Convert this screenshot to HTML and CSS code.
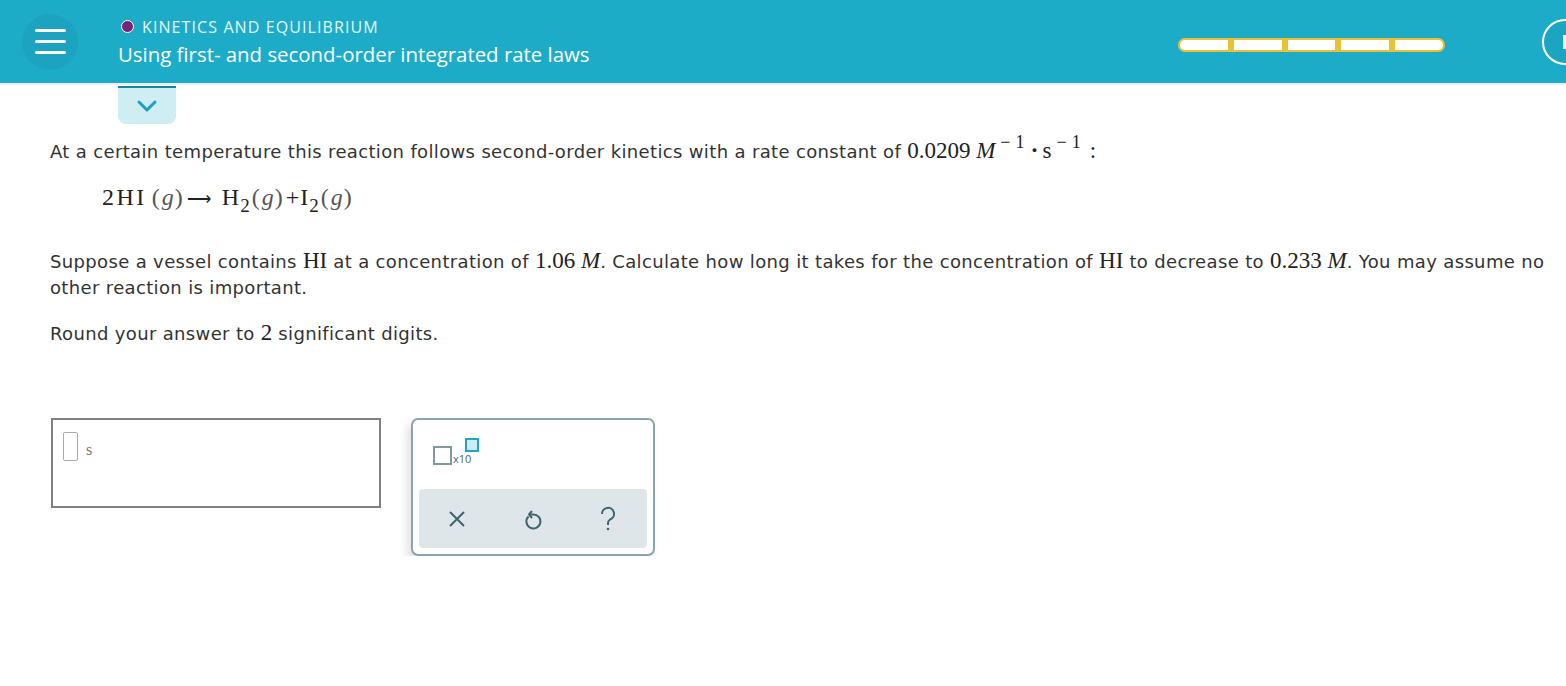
FILE: index.html
```html
<!DOCTYPE html>
<html lang="en">
<head>
  <meta charset="UTF-8">
  <title>Using first- and second-order integrated rate laws</title>
  <link rel="stylesheet" href="styles.css">
</head>
<body>
  <header class="topbar">
    <div class="menu-btn"><span></span><span></span><span></span></div>
    <div class="titles">
      <div class="topic"><span class="dot"></span>KINETICS AND EQUILIBRIUM</div>
      <div class="lesson">Using first- and second-order integrated rate laws</div>
    </div>
    <div class="progress">
      <span></span><span></span><span></span><span></span><span></span>
    </div>
    <div class="round-btn"><span></span></div>
  </header>

  <main class="content">
    <div class="tab">
      <svg width="22" height="14" viewBox="0 0 22 14"><path d="M3 3 L11 11 L19 3" fill="none" stroke="#1a9fc0" stroke-width="3" stroke-linecap="round" stroke-linejoin="round"/></svg>
    </div>

    <p class="q first">At a certain temperature this reaction follows second-order kinetics with a rate constant of <span class="math">0.0209 <i>M</i><sup><span class="minus">−</span>1</sup><b class="cdot">·</b>s<sup><span class="minus">−</span>1</sup><span class="colon">:</span></span></p>

    <p class="equation"><span class="math"><span class="species">2HI</span><span class="paren">(<i>g</i>)</span><span class="arrow">⟶</span>H<sub>2</sub><span class="paren">(<i>g</i>)</span><span class="plus">+</span>I<sub>2</sub><span class="paren">(<i>g</i>)</span></span></p>

    <p class="q">Suppose a vessel contains <span class="math">HI</span> at a concentration of <span class="math">1.06 <i>M</i></span>. Calculate how long it takes for the concentration of <span class="math">HI</span> to decrease to <span class="math">0.233 <i>M</i></span>. You may assume no other reaction is important.</p>

    <p class="q">Round your answer to <span class="math">2</span> significant digits.</p>

    <div class="answer-row">
      <div class="answer-box">
        <span class="slot"></span><span class="unit">s</span>
      </div>
      <div class="palette">
        <div class="palette-top">
          <div class="sci">
            <span class="sci-box"></span><span class="sci-x">x10</span><span class="sci-exp"></span>
          </div>
        </div>
        <div class="palette-tools">
          <svg width="20" height="20" viewBox="0 0 20 20"><path d="M3 3 L17 17 M17 3 L3 17" stroke="#3f6470" stroke-width="2" fill="none"/></svg>
          <svg width="20" height="24" viewBox="0 0 20 24"><path d="M5.5 9.5 A7 7 0 1 0 10 7.5 L7 7.5" stroke="#3f6470" stroke-width="2" fill="none"/><path d="M9 4 L6 7.5 L9 11" stroke="#3f6470" stroke-width="2" fill="none" stroke-linejoin="round"/></svg>
          <svg width="20" height="26" viewBox="0 0 20 26"><path d="M4 8 A6 6 0 1 1 12 13.5 C10.5 14.5 10 15.5 10 17.5 L10 19" stroke="#3f6470" stroke-width="2" fill="none"/><circle cx="10" cy="23" r="1.3" fill="#3f6470"/></svg>
        </div>
      </div>
    </div>
  </main>
</body>
</html>
```

FILE: styles.css
```css
body {
  margin: 0;
  background: #fff;
  color: #333;
  font-family: "DejaVu Sans", Verdana, sans-serif;
  font-size: 18px;
  letter-spacing: 0.35px;
  overflow: hidden;
}
.topbar {
  display: flex;
  align-items: center;
  height: 83px;
  background: #1dacc8;
  border-bottom: 2px solid #eceeef;
  overflow: hidden;
  letter-spacing: normal;
}
.menu-btn {
  display: flex;
  flex-direction: column;
  justify-content: center;
  align-items: center;
  gap: 8px;
  width: 56px;
  height: 56px;
  margin-left: 22px;
  border-radius: 50%;
  background: #1ca3bf;
  flex-shrink: 0;
}
.menu-btn span {
  display: block;
  width: 31px;
  height: 3px;
  background: #fff;
  border-radius: 2px;
}
.titles {
  flex: 1;
  margin-left: 40px;
  font-family: "Open Sans", sans-serif;
}
.topic {
  display: flex;
  align-items: center;
  font-size: 16px;
  letter-spacing: 1.1px;
  color: #e3f5f8;
  margin-left: 3px;
}
.dot {
  width: 11px;
  height: 11px;
  border-radius: 50%;
  background: #76237e;
  border: 1.5px solid #fff;
  margin-right: 8px;
}
.lesson {
  font-size: 20.4px;
  color: #fff;
  margin-top: 2px;
}
.progress {
  display: flex;
  gap: 6px;
  width: 263px;
  height: 10px;
  padding: 2px;
  background: #ebc133;
  border-radius: 7px;
  margin-top: 6px;
  flex-shrink: 0;
}
.progress span {
  flex: 1;
  background: #fff;
}
.progress span:first-child { border-radius: 5px 0 0 5px; }
.progress span:last-child { border-radius: 0 5px 5px 0; }
.round-btn {
  width: 42px;
  height: 42px;
  border: 2px solid #fff;
  border-radius: 50%;
  background: #1ca5c1;
  margin-left: 97px;
  margin-right: -22px;
  flex-shrink: 0;
  display: flex;
  align-items: center;
  justify-content: flex-end;
}
.round-btn span {
  width: 3px;
  height: 14px;
  background: #e8f8fb;
  margin-right: 20px;
}

.content {
  padding: 0 0 0 50px;
}
.tab {
  width: 58px;
  height: 36px;
  margin-left: 68px;
  margin-top: 1px;
  background: #cfeef4;
  border-top: 2px solid #13889e;
  border-radius: 0 0 8px 8px;
  display: flex;
  align-items: center;
  justify-content: center;
}
.q {
  margin: 0;
  line-height: 26px;
}
.q.first {
  margin-top: 13px;
}
.math {
  font-family: "Liberation Serif", "Times New Roman", serif;
  font-size: 23px;
  letter-spacing: 0;
  color: #222;
}
.math sup {
  font-size: 18px;
  vertical-align: 10px;
  line-height: 0;
  margin-left: 5px;
}
.minus {
  margin-right: 5px;
}
.cdot {
  margin: 0 4px 0 6px;
  font-size: 24px;
}
.colon {
  margin-left: 9px;
}
.equation {
  margin: 17px 0 0 52px;
  line-height: 30px;
}
.equation .math {
  font-size: 24px;
}
.species {
  letter-spacing: 2.5px;
  margin-right: 3px;
}
.equation sub {
  font-size: 19px;
  vertical-align: -7px;
  line-height: 0;
  margin-left: 1px;
}
.paren {
  margin: 0 2px 0 2px;
  color: #555;
}
.paren i {
  padding: 0 1px 0 2px;
}
.arrow {
  display: inline-block;
  font-size: 20px;
  margin: 0 8px 0 0;
  transform: scaleX(0.85);
}
.plus {
  margin: 0 1px;
}
.equation + .q {
  margin-top: 34px;
}
.q + .q {
  margin-top: 19px;
}

.answer-row {
  display: flex;
  align-items: flex-start;
  gap: 30px;
  margin-top: 71px;
  margin-left: 1px;
}
.answer-box {
  border: 2px solid #808080;
  display: flex;
  align-items: flex-start;
  padding: 12px 0 0 10px;
  box-sizing: border-box;
  width: 330px;
  height: 90px;
}
.slot {
  width: 13px;
  height: 27px;
  border: 1.5px solid #aaa;
  border-radius: 2px;
}
.unit {
  font-family: "Liberation Serif", serif;
  font-size: 16px;
  letter-spacing: 0;
  color: #777;
  margin: 9px 0 0 8px;
}
.palette {
  width: 244px;
  height: 138px;
  box-sizing: border-box;
  border: 2px solid #8aa4ac;
  border-radius: 7px;
  box-shadow: -4px 5px 10px rgba(0, 0, 0, 0.12);
  padding: 0 6px 6px;
  display: flex;
  flex-direction: column;
  letter-spacing: normal;
}
.palette-top {
  height: 69px;
  position: relative;
}
.sci {
  position: absolute;
  left: 14px;
  top: 18px;
  width: 50px;
  height: 30px;
}
.sci-box {
  position: absolute;
  left: 0;
  top: 8px;
  width: 15px;
  height: 15px;
  border: 2px solid #7f9aa3;
}
.sci-x {
  position: absolute;
  left: 20px;
  top: 13px;
  font-family: "Open Sans", sans-serif;
  font-size: 11px;
  color: #4a6670;
}
.sci-exp {
  position: absolute;
  left: 32px;
  top: 0;
  width: 10px;
  height: 10px;
  background: #cdebf3;
  border: 2px solid #21a3c2;
}
.palette-tools {
  flex: 1;
  background: #dfe6e9;
  border-radius: 4px;
  display: flex;
  align-items: center;
  justify-content: space-between;
  padding: 0 29px 0 28px;
}
```
